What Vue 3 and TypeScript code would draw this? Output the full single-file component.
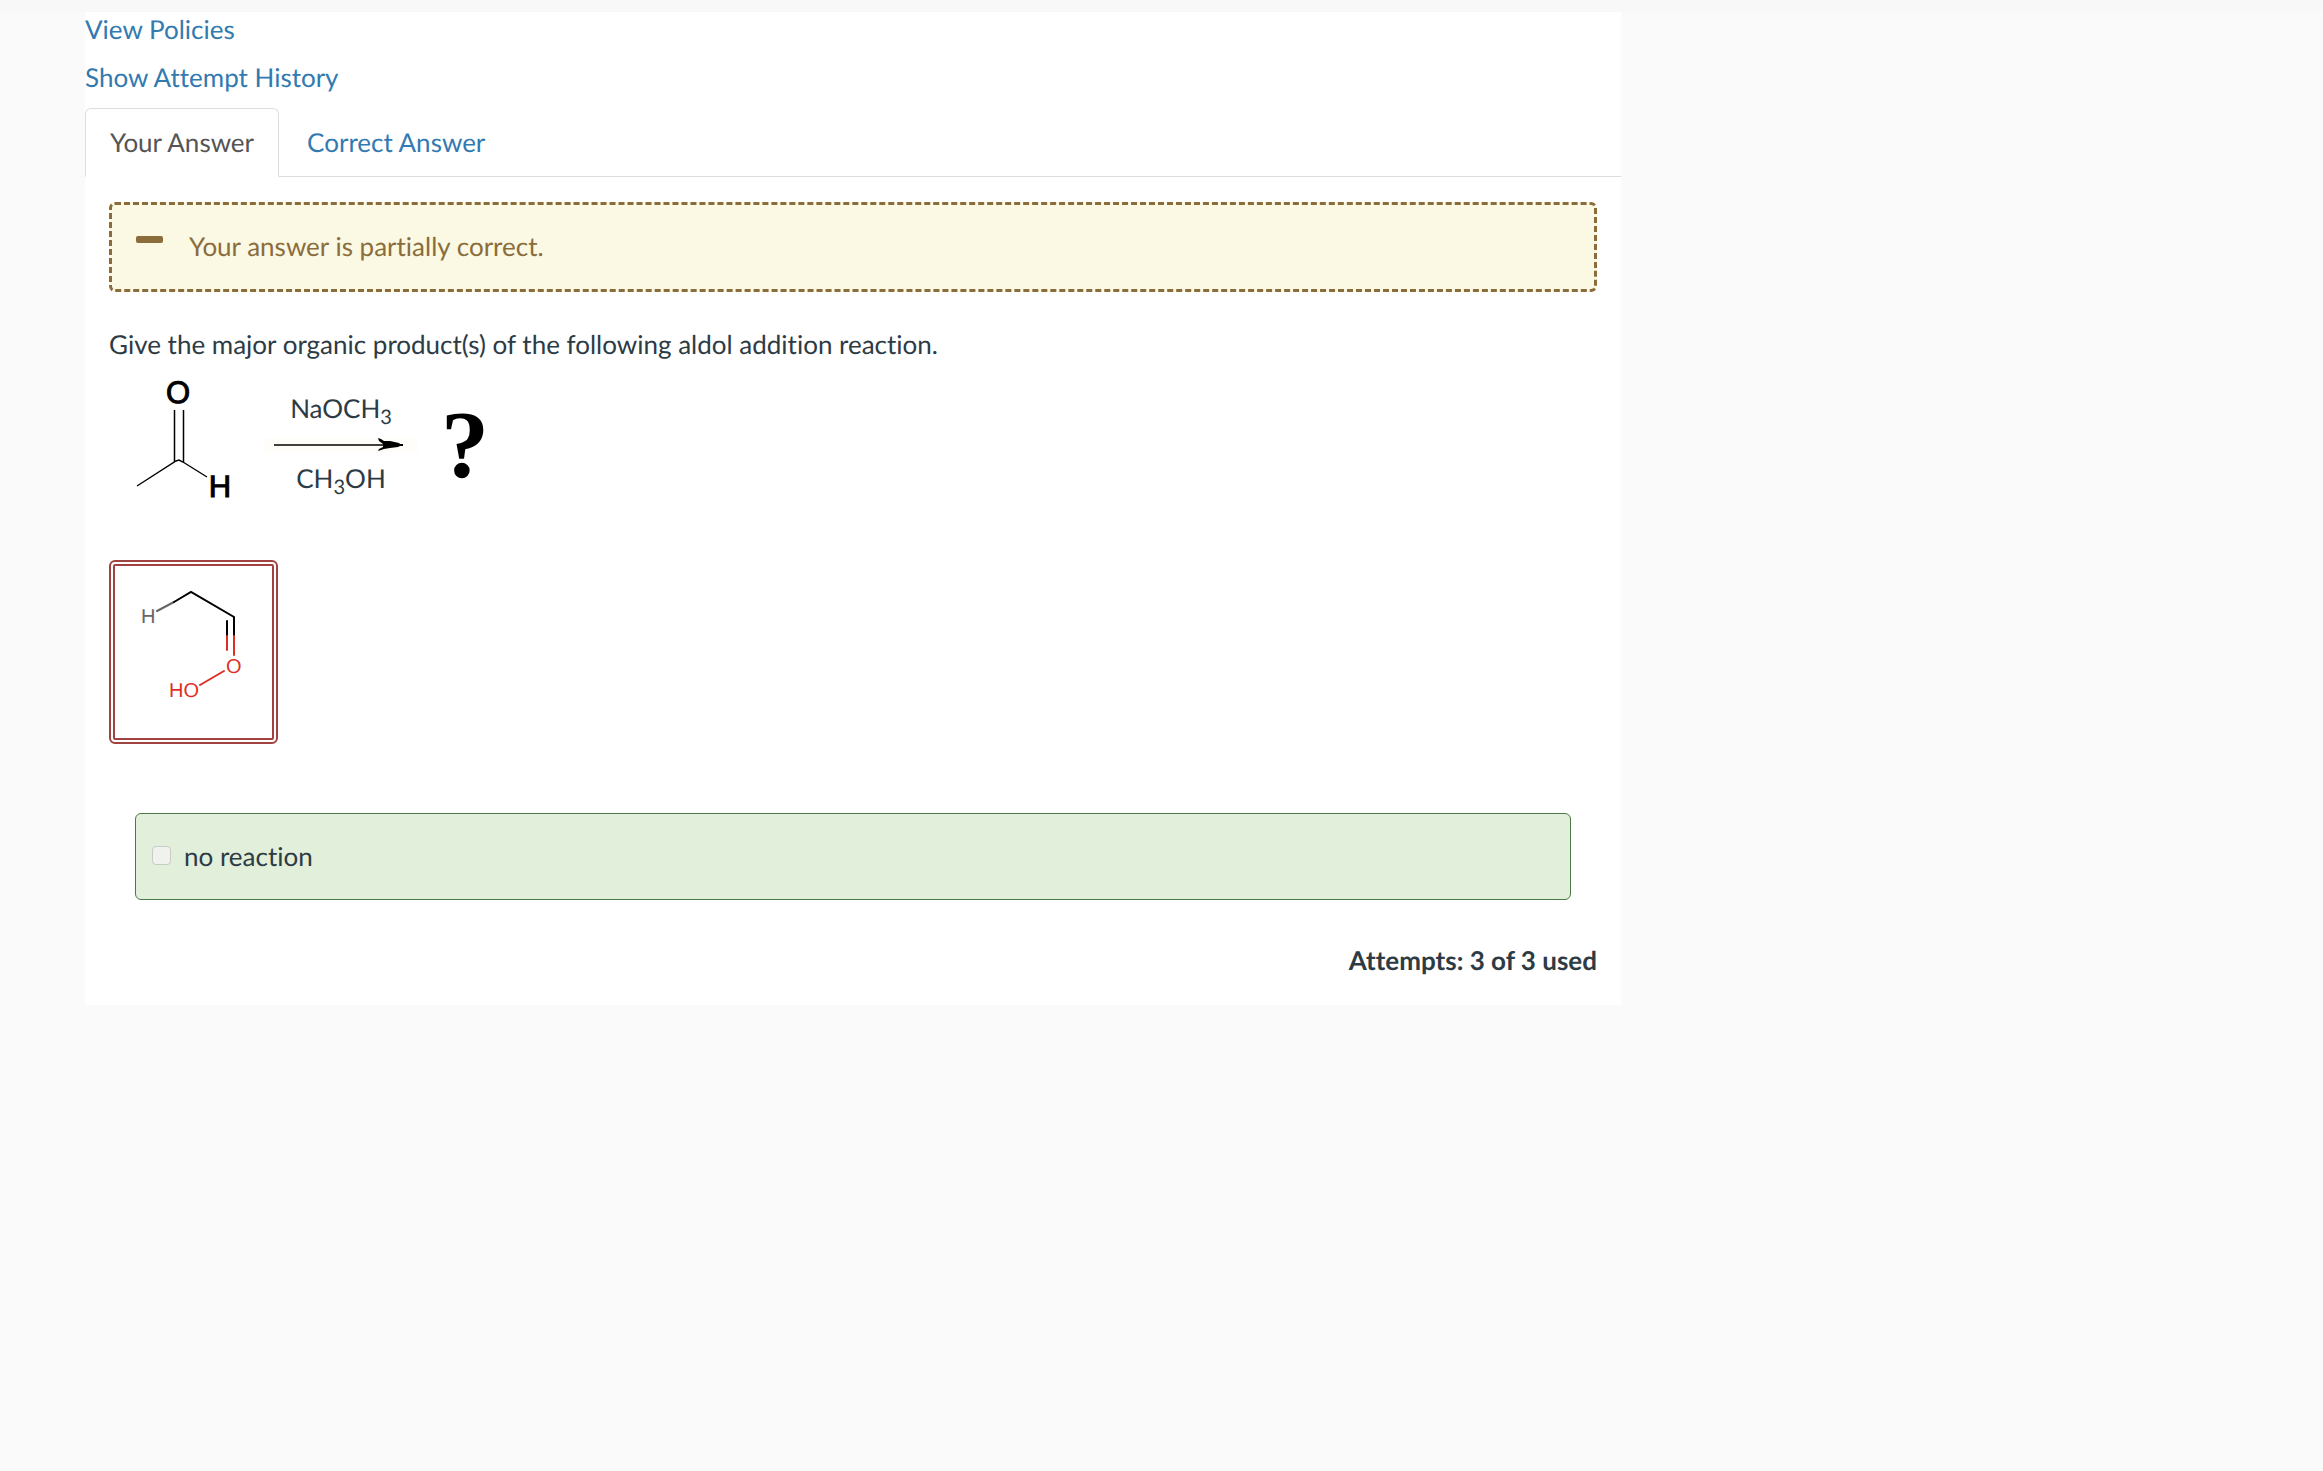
<script setup lang="ts">
import { ref } from 'vue'

type TabId = 'yours' | 'correct'

interface Tab {
  id: TabId
  label: string
}

const tabs: Tab[] = [
  { id: 'yours', label: 'Your Answer' },
  { id: 'correct', label: 'Correct Answer' },
]
const activeTab = ref<TabId>('yours')
const noReaction = ref(false)
</script>

<template>
  <div class="top-strip"></div>
  <main class="panel">
    <nav class="links">
      <a href="#policies">View Policies</a>
      <a href="#history">Show Attempt History</a>
    </nav>

    <div class="tabs" role="tablist">
      <button
        v-for="tab in tabs"
        :key="tab.id"
        type="button"
        role="tab"
        class="tab"
        :class="{ active: tab.id === activeTab }"
        :aria-selected="tab.id === activeTab"
        @click="activeTab = tab.id"
      >{{ tab.label }}</button>
    </div>

    <section class="content">
      <div class="alert" role="status">
        <svg class="minus" width="27" height="7" viewBox="0 0 27 7" aria-hidden="true">
          <rect width="27" height="7" rx="2" fill="#8a6d3b" />
        </svg>
        <span>Your answer is partially correct.</span>
      </div>

      <p class="question">Give the major organic product(s) of the following aldol addition reaction.</p>

      <div class="reaction">
        <!-- acetaldehyde -->
        <svg class="molecule" width="155" height="140" viewBox="0 0 155 140">
          <text class="atom" x="69" y="33" text-anchor="middle">O</text>
          <g fill="none" stroke="#000">
            <path d="M65.500 40V92M74.500 40V92" stroke-width="1.500" />
            <path d="M28 116L67 91L70 90L74 92L98 107" stroke-width="1.400" />
          </g>
          <text class="atom" x="111" y="127" text-anchor="middle">H</text>
        </svg>
        <div class="conditions">
          <span>NaOCH<sub>3</sub></span>
          <svg class="arrow" width="154" height="15" viewBox="0 0 154 15" aria-hidden="true">
            <path d="M10 7H124" stroke="#000" stroke-width="1.600" />
            <path d="M114 0L117 1L120 3L126 3L135 5L136 6L139 6V8L136 8L134 9L126 10L120 11L117 12L114 13L115 11L119 9V6L115 3Z" />
          </svg>
          <span>CH<sub>3</sub>OH</span>
        </div>
        <span class="unknown">?</span>
      </div>

      <div class="drawing">
        <svg width="157" height="172" viewBox="0 0 157 172">
          <g fill="none" stroke-width="2" stroke-linecap="round">
            <path d="M42 45L59 36" stroke="#666" />
            <path d="M59 36L76 26L119 51V70M112 55V70" stroke="#000" />
            <path d="M119 70V89M112 70V84M109 105L85 119" stroke="#dc2f26" />
          </g>
          <text class="label" x="26" y="57" fill="#666">H</text>
          <text class="label" x="111" y="107" fill="#dc2f26">O</text>
          <text class="label" x="54" y="131" fill="#dc2f26">HO</text>
        </svg>
      </div>

      <label class="choice" for="no-reaction">
        <input id="no-reaction" v-model="noReaction" type="checkbox" disabled />
        <span>no reaction</span>
      </label>

      <p class="attempts">Attempts: 3 of 3 used</p>
    </section>
  </main>
</template>

<style>
body {
  background: #fafafa;
}
</style>

<style scoped>
.top-strip {
  height: 12px;
  background: #f8f8f8;
}

.panel {
  box-sizing: border-box;
  max-width: 1536px;
  margin-left: 85px;
  background: #fff;
  color: #2d3b45;
  font: 26px/34px Lato, sans-serif;
  font-variant-ligatures: none;
  text-rendering: geometricPrecision;
}

.links {
  display: flex;
  flex-direction: column;
  align-items: flex-start;
  gap: 14px;
}

.links a {
  color: #337ab0;
  text-decoration: none;
}

.tabs {
  display: flex;
  gap: 3px;
  margin-top: 14px;
  border-bottom: 1px solid #ddd;
}

.tab {
  margin: 0 0 -1px;
  padding: 16px 24px 17px;
  border: 1px solid transparent;
  border-radius: 6px 6px 0 0;
  background: none;
  color: #337ab0;
  font: inherit;
  text-rendering: inherit;
}

.tab.active {
  border-color: #ddd #ddd #fff;
  background: #fff;
  color: #555;
}

.content {
  display: flex;
  flex-direction: column;
  padding: 25px 24px 28px;
}

.alert {
  display: flex;
  gap: 26px;
  padding: 24px 24px 26px;
  border: 3px dashed #8a6d3b;
  border-radius: 6px;
  background: #fbf8e4;
  color: #8a6d3b;
}

.minus {
  margin-top: 7px;
}

.question {
  margin: 35px 0 9px;
}

.reaction {
  display: flex;
  height: 140px;
}

.atom {
  font: 31px "Liberation Sans", sans-serif;
  fill: #000;
  stroke: #000;
  stroke-width: 1px;
}

.conditions {
  display: flex;
  flex-direction: column;
  align-items: center;
  padding-top: 21px;
}

.conditions sub {
  font-size: 20px;
  line-height: 0;
}

.arrow {
  margin: 13px 0 8px;
  background: #fffdfa;
}

.unknown {
  margin-left: 23px;
  color: #000;
  font: bold 96px/150px "Liberation Serif", serif;
}

.drawing {
  align-self: flex-start;
  display: flex;
  margin-top: 50px;
  border: 6px double #a04340;
  border-radius: 6px;
}

.label {
  font: 20px "Liberation Sans", sans-serif;
}

.choice {
  display: flex;
  align-items: center;
  gap: 13px;
  margin: 69px 26px 0;
  padding: 25px 16px 26px;
  border: 1px solid #4b7a45;
  border-radius: 6px;
  background: #e2efda;
}

.choice input {
  appearance: none;
  box-sizing: border-box;
  width: 19px;
  height: 19px;
  margin: 0 0 2px;
  border: 1px solid #c8cbc6;
  border-radius: 4px;
  background: #f0f3ed;
}

.attempts {
  margin: 43px 0 0;
  font-weight: 700;
  text-align: right;
}
</style>
